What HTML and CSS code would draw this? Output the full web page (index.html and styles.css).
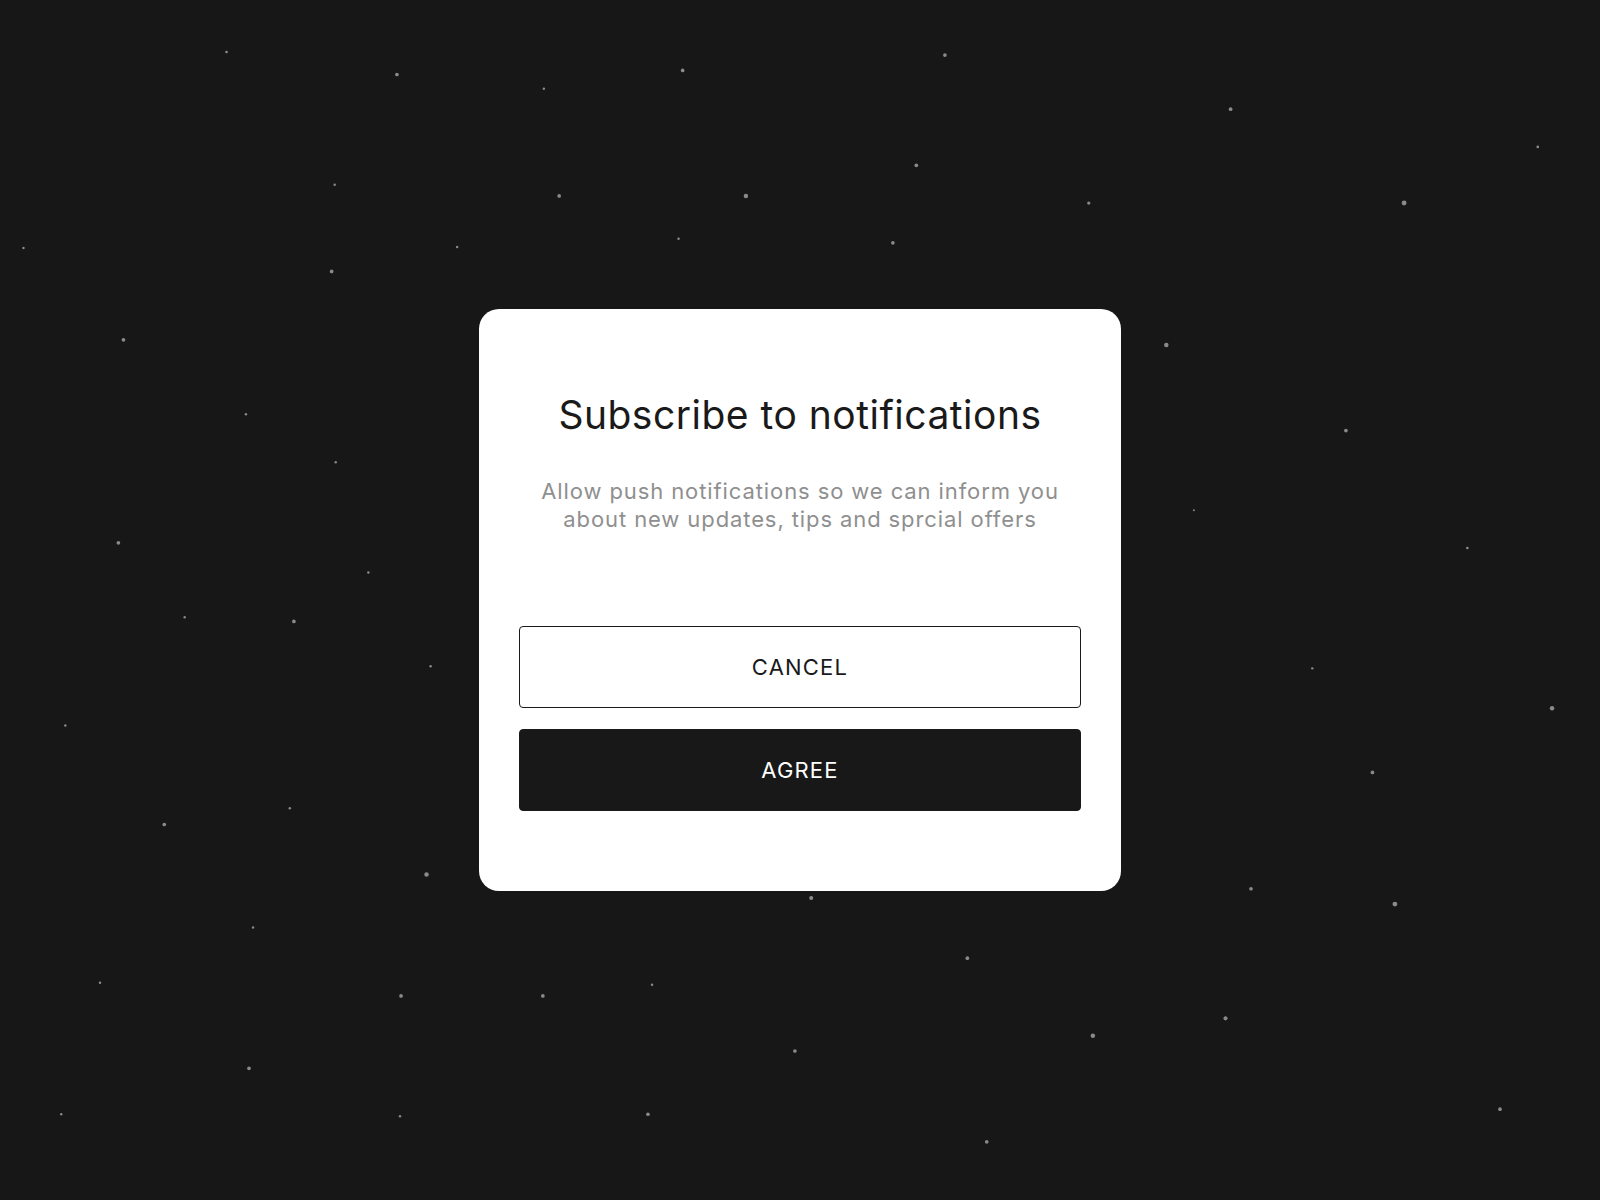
FILE: index.html
```html
<!DOCTYPE html>
<html lang="en">
<head>
  <meta charset="UTF-8" />
  <meta name="viewport" content="width=device-width, initial-scale=1.0" />
  <title>Subscribe to notifications</title>
  <link rel="stylesheet" href="styles.css">
</head>
<body>

  <!-- Fondo de estrellas -->
  <svg class="estrellas" viewBox="0 0 1568 1176" preserveAspectRatio="none" aria-hidden="true">
    <g fill="#8a8a8a">
      <circle cx="222" cy="51" r="1.3" />
      <circle cx="389" cy="73" r="1.8" />
      <circle cx="533" cy="87" r="1.2" />
      <circle cx="669" cy="69" r="1.8" />
      <circle cx="926" cy="54" r="1.8" />
      <circle cx="1206" cy="107" r="1.8" />
      <circle cx="1507" cy="144" r="1.3" />
      <circle cx="328" cy="181" r="1.2" />
      <circle cx="548" cy="192" r="1.8" />
      <circle cx="731" cy="192" r="2.2" />
      <circle cx="898" cy="162" r="1.8" />
      <circle cx="1067" cy="199" r="1.6" />
      <circle cx="1376" cy="199" r="2.4" />
      <circle cx="23" cy="243" r="1.2" />
      <circle cx="448" cy="242" r="1.2" />
      <circle cx="665" cy="234" r="1.2" />
      <circle cx="875" cy="238" r="1.8" />
      <circle cx="325" cy="266" r="1.8" />
      <circle cx="121" cy="333" r="1.8" />
      <circle cx="1143" cy="338" r="2.2" />
      <circle cx="241" cy="406" r="1.2" />
      <circle cx="1319" cy="422" r="1.8" />
      <circle cx="329" cy="453" r="1.2" />
      <circle cx="1170" cy="500" r="1" />
      <circle cx="116" cy="532" r="1.8" />
      <circle cx="1438" cy="537" r="1.3" />
      <circle cx="361" cy="561" r="1.2" />
      <circle cx="181" cy="605" r="1.2" />
      <circle cx="288" cy="609" r="1.8" />
      <circle cx="422" cy="653" r="1.2" />
      <circle cx="1286" cy="655" r="1.2" />
      <circle cx="1521" cy="694" r="2.2" />
      <circle cx="64" cy="711" r="1.2" />
      <circle cx="1345" cy="757" r="1.8" />
      <circle cx="284" cy="792" r="1.2" />
      <circle cx="161" cy="808" r="1.8" />
      <circle cx="418" cy="857" r="2.2" />
      <circle cx="795" cy="880" r="2" />
      <circle cx="1226" cy="871" r="1.8" />
      <circle cx="1367" cy="886" r="2.4" />
      <circle cx="248" cy="909" r="1.2" />
      <circle cx="948" cy="939" r="1.8" />
      <circle cx="98" cy="963" r="1.2" />
      <circle cx="393" cy="976" r="1.8" />
      <circle cx="532" cy="976" r="1.8" />
      <circle cx="639" cy="965" r="1.2" />
      <circle cx="1201" cy="998" r="2" />
      <circle cx="779" cy="1030" r="1.8" />
      <circle cx="1071" cy="1015" r="2.2" />
      <circle cx="244" cy="1047" r="1.8" />
      <circle cx="60" cy="1092" r="1.2" />
      <circle cx="392" cy="1094" r="1.2" />
      <circle cx="635" cy="1092" r="1.8" />
      <circle cx="1470" cy="1087" r="1.8" />
      <circle cx="967" cy="1119" r="1.8" />
    </g>
  </svg>

  <div class="modal">
    <h1 class="modal-titulo">Subscribe to notifications</h1>
    <p class="modal-texto">Allow push notifications so we can inform you<br>about new updates, tips and sprcial offers</p>
    <div class="modal-botones">
      <button class="btn btn-cancelar">CANCEL</button>
      <button class="btn btn-aceptar">AGREE</button>
    </div>
  </div>

</body>
</html>
```

FILE: styles.css
```css
/* Reset y base */
* {
  margin: 0;
  padding: 0;
  box-sizing: border-box;
}

html, body {
  width: 100%;
  height: 100%;
}

body {
  font-family: 'Inter', 'Noto Sans', sans-serif;
  background-color: #171717;
  color: #1a1a1a;
  display: flex;
  align-items: center;
  justify-content: center;
  position: relative;
  overflow: hidden;
}

/* Estrellas detras de todo */
.estrellas {
  position: absolute;
  top: 0;
  left: 0;
  width: 100%;
  height: 100%;
  z-index: 0;
}

/* Ventana del aviso */
.modal {
  position: relative;
  z-index: 1;
  width: 642px;
  height: 582px;
  background: #ffffff;
  border-radius: 20px;
  padding: 82px 40px 80px;
  text-align: center;
  display: flex;
  flex-direction: column;
}

.modal-titulo {
  font-size: 39px;
  font-weight: 400;
  line-height: 48px;
  letter-spacing: 0.5px;
  color: #1a1a1a;
  margin-bottom: 38px;
}

.modal-texto {
  font-size: 22px;
  line-height: 28px;
  letter-spacing: 0.9px;
  color: #8f8f8f;
}

.modal-botones {
  margin-top: auto;
  display: flex;
  flex-direction: column;
  gap: 21px;
}

.btn {
  height: 82px;
  width: 100%;
  border-radius: 4px;
  border: 1px solid #1a1a1a;
  font-family: inherit;
  font-size: 22px;
  font-weight: 400;
  letter-spacing: 1.2px;
  cursor: pointer;
}

.btn-cancelar {
  background: #ffffff;
  color: #1a1a1a;
}

.btn-aceptar {
  background: #181818;
  color: #ffffff;
}
```
